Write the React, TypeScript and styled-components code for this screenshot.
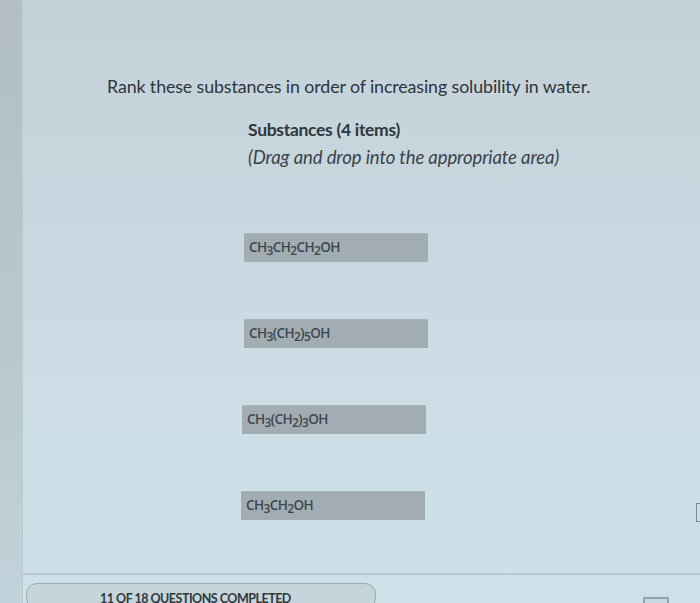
import styled, { createGlobalStyle } from "styled-components";

const GlobalStyle = createGlobalStyle`
  html, body {
    margin: 0;
    padding: 0;
  }
  body {
    font-family: Lato, "Open Sans", "Liberation Sans", sans-serif;
    background: #c8d6de;
  }
`;

const Page = styled.div`
  width: 700px;
  height: 603px;
  display: flex;
  overflow: hidden;
`;

const Bezel = styled.div`
  width: 22px;
  flex-shrink: 0;
  background: linear-gradient(180deg, #b3bec6 0%, #b9c8cf 60%, #c1d3da 100%);
  border-right: 1px solid #bccad1;
`;

const Screen = styled.div`
  flex: 1;
  display: flex;
  flex-direction: column;
  background: linear-gradient(180deg, #c4d0d8 0%, #c8d7df 35%, #cddfe7 75%, #cde1e9 100%);
  position: relative;
`;

const Question = styled.h1`
  margin: 74px 0 0 84px;
  font-size: 17.8px;
  line-height: 24px;
  font-weight: 400;
  color: #2c353b;
  letter-spacing: -0.1px;
`;

const Instructions = styled.div`
  margin: 21px 0 0 225px;
  display: flex;
  flex-direction: column;
  gap: 5px;
  color: #323c42;
`;

const Heading = styled.div`
  font-size: 17.5px;
  line-height: 22px;
  font-weight: 700;
  color: #2e383e;
  letter-spacing: -0.3px;
`;

const Hint = styled.div`
  font-size: 18.5px;
  line-height: 23px;
  font-style: italic;
  color: #3a444a;
  letter-spacing: -0.1px;
`;

const ItemList = styled.ul`
  list-style: none;
  margin: 64px 0 0 0;
  padding: 0;
  display: flex;
  flex-direction: column;
  gap: 57px;
`;

const Item = styled.li<{ $shift: number }>`
  margin-left: ${(p) => 221 - p.$shift}px;
  width: 184px;
  height: 29px;
  box-sizing: border-box;
  padding: 0 5px 3px;
  display: flex;
  align-items: center;
  background: #a2adb3;
  border-top: 1px solid #aab5ba;
  color: #3d474d;
  font-family: "Open Sans", "Liberation Sans", sans-serif;
  font-size: 13.5px;
  font-weight: 600;
  letter-spacing: -0.6px;

  sub {
    font-size: 12px;
    vertical-align: -3px;
    line-height: 0;
  }
`;

const Footer = styled.div`
  margin-top: auto;
  height: 30px;
  box-sizing: border-box;
  border-top: 2px solid #b9cad2;
  padding: 8px 0 0 3px;
  display: flex;
  align-items: flex-start;
  justify-content: space-between;
`;

const Progress = styled.div`
  width: 350px;
  height: 26px;
  flex-shrink: 0;
  box-sizing: border-box;
  border: 1px solid #9fa9ae;
  border-radius: 11px;
  background: #c6d5dc;
  padding: 7px 0 0 73px;
  font-size: 12.5px;
  font-weight: 700;
  color: #2f393e;
  letter-spacing: -0.5px;
  white-space: nowrap;
`;

const NavButton = styled.div`
  margin: 14px 31px 0 0;
  width: 22px;
  height: 10px;
  border: 2px solid #8ea2b4;
  border-bottom: none;
  border-radius: 2px 2px 0 0;
  background: #c7d9e3;
`;

const EdgeMark = styled.div`
  position: absolute;
  right: 0;
  top: 503px;
  width: 3px;
  height: 17px;
  border: 1px solid #7c8a92;
  border-right: none;
`;

const formulas: { parts: [string, string?][]; shift: number }[] = [
  {
    parts: [["CH", "3"], ["CH", "2"], ["CH", "2"], ["OH"]],
    shift: 0,
  },
  {
    parts: [["CH", "3"], ["(CH", "2"], [")", "5"], ["OH"]],
    shift: 0,
  },
  {
    parts: [["CH", "3"], ["(CH", "2"], [")", "3"], ["OH"]],
    shift: 2,
  },
  {
    parts: [["CH", "3"], ["CH", "2"], ["OH"]],
    shift: 3,
  },
];

export default function App() {
  return (
    <Page>
      <GlobalStyle />
      <Bezel />
      <Screen>
        <Question>
          Rank these substances in order of increasing solubility in water.
        </Question>
        <Instructions>
          <Heading>Substances (4 items)</Heading>
          <Hint>(Drag and drop into the appropriate area)</Hint>
        </Instructions>
        <ItemList>
          {formulas.map((f, idx) => (
            <Item key={idx} $shift={f.shift}>
              {f.parts.map(([base, sub], i) => (
                <span key={i}>
                  {base}
                  {sub && <sub>{sub}</sub>}
                </span>
              ))}
            </Item>
          ))}
        </ItemList>
        <Footer>
          <Progress>11 OF 18 QUESTIONS COMPLETED</Progress>
          <NavButton />
        </Footer>
        <EdgeMark />
      </Screen>
    </Page>
  );
}
